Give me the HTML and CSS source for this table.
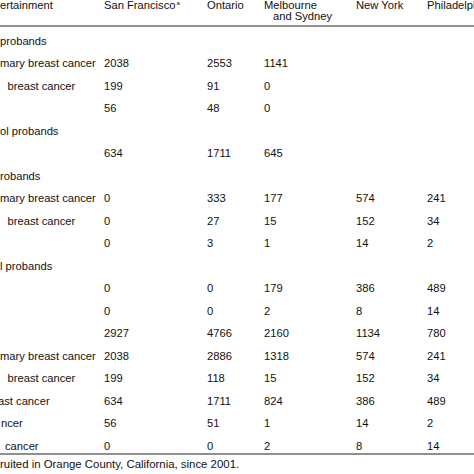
FILE: index.html
```html
<!DOCTYPE html>
<html>
<head>
<meta charset="utf-8">
<link rel="stylesheet" href="styles.css">
</head>
<body>
<div class="frame">
<table class="data">
<colgroup>
<col class="c1"><col class="c2"><col class="c3"><col class="c4"><col class="c5"><col class="c6">
</colgroup>
<thead>
<tr>
<th>ertainment</th>
<th>San Francisco<sup>a</sup></th>
<th>Ontario</th>
<th>Melbourne<br><span class="sub">and Sydney</span></th>
<th>New York</th>
<th>Philadelphia</th>
</tr>
</thead>
<tbody>
<tr class="first"><td>probands</td><td></td><td></td><td></td><td></td><td></td></tr>
<tr><td>mary breast cancer</td><td>2038</td><td>2553</td><td>1141</td><td></td><td></td></tr>
<tr><td class="in8">breast cancer</td><td>199</td><td>91</td><td>0</td><td></td><td></td></tr>
<tr><td></td><td>56</td><td>48</td><td>0</td><td></td><td></td></tr>
<tr><td>ol probands</td><td></td><td></td><td></td><td></td><td></td></tr>
<tr><td></td><td>634</td><td>1711</td><td>645</td><td></td><td></td></tr>
<tr><td>robands</td><td></td><td></td><td></td><td></td><td></td></tr>
<tr><td>mary breast cancer</td><td>0</td><td>333</td><td>177</td><td>574</td><td>241</td></tr>
<tr><td class="in8">breast cancer</td><td>0</td><td>27</td><td>15</td><td>152</td><td>34</td></tr>
<tr><td></td><td>0</td><td>3</td><td>1</td><td>14</td><td>2</td></tr>
<tr><td>l probands</td><td></td><td></td><td></td><td></td><td></td></tr>
<tr><td></td><td>0</td><td>0</td><td>179</td><td>386</td><td>489</td></tr>
<tr><td></td><td>0</td><td>0</td><td>2</td><td>8</td><td>14</td></tr>
<tr><td></td><td>2927</td><td>4766</td><td>2160</td><td>1134</td><td>780</td></tr>
<tr><td>mary breast cancer</td><td>2038</td><td>2886</td><td>1318</td><td>574</td><td>241</td></tr>
<tr><td class="in8">breast cancer</td><td>199</td><td>118</td><td>15</td><td>152</td><td>34</td></tr>
<tr><td class="inneg">ast cancer</td><td>634</td><td>1711</td><td>824</td><td>386</td><td>489</td></tr>
<tr><td class="in1">ncer</td><td>56</td><td>51</td><td>1</td><td>14</td><td>2</td></tr>
<tr class="last"><td class="in5">cancer</td><td>0</td><td>0</td><td>2</td><td>8</td><td>14</td></tr>
</tbody>
</table>
<p class="note">ruited in Orange County, California, since 2001.</p>
</div>
</body>
</html>
```
FILE: styles.css
```css
html, body {
  margin: 0;
  padding: 0;
  background: #ffffff;
  overflow: hidden;
}
.frame {
  width: 474px;
  height: 474px;
  overflow: hidden;
  font-family: "Liberation Sans", Arial, sans-serif;
  font-size: 11.2px;
  color: #111111;
}
.data {
  table-layout: fixed;
  width: 487px;
  border-collapse: collapse;
  border-spacing: 0;
}
.c1 { width: 104px; }
.c2 { width: 103px; }
.c3 { width: 57px; }
.c4 { width: 92px; }
.c5 { width: 71px; }
.c6 { width: 60px; }
.data th {
  font-weight: normal;
  text-align: left;
  vertical-align: top;
  line-height: 11px;
  padding: 0 0 2.5px 0;
  white-space: nowrap;
  border-bottom: 2px solid #8f8f8f;
}
.data th sup {
  font-size: 6px;
  line-height: 0;
  vertical-align: 4px;
  margin-left: 1px;
}
.data th .sub {
  padding-left: 9px;
}
.data td {
  text-align: left;
  line-height: 13px;
  padding: 4.8px 0 4.7px 0;
  white-space: nowrap;
}
.data tr.first td {
  padding-top: 8.3px;
}
.data tr.last td {
  padding-bottom: 0.5px;
  border-bottom: 2px solid #8f8f8f;
}
.in8 { text-indent: 7.5px; }
.in5 { text-indent: 5px; }
.in1 { text-indent: 1px; }
.inneg { text-indent: -2px; }
.note {
  margin: 3px 0 0 0;
  font-size: 11.4px;
  line-height: 13px;
  white-space: nowrap;
}
```
